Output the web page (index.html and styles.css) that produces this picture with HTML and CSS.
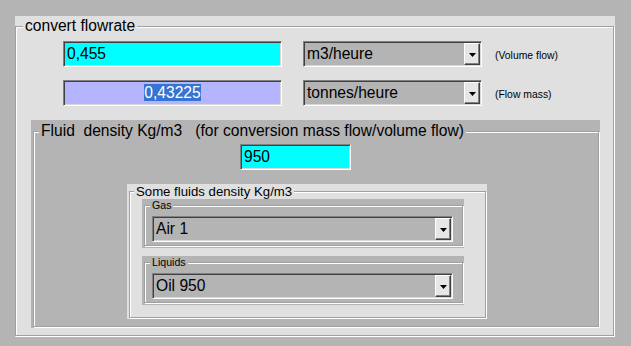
FILE: index.html
```html
<!DOCTYPE html>
<html>
<head>
<meta charset="utf-8">
<title>convert flowrate</title>
<link rel="stylesheet" href="styles.css">
</head>
<body>
<div class="panel">
  <fieldset class="grp grp-main">
    <legend class="lg-main">convert flowrate</legend>
    <div class="row row-first">
      <div class="field cyan">0,455</div>
      <div class="combo combo-unit"><span class="combo-text">m3/heure</span><span class="btn"><svg width="7" height="4" viewBox="0 0 7 4"><polygon points="0,0 7,0 3.5,4" fill="#000"/></svg></span></div>
      <div class="note">(Volume flow)</div>
    </div>
    <div class="row">
      <div class="field lavender center"><span class="sel">0,43225</span></div>
      <div class="combo combo-unit"><span class="combo-text">tonnes/heure</span><span class="btn"><svg width="7" height="4" viewBox="0 0 7 4"><polygon points="0,0 7,0 3.5,4" fill="#000"/></svg></span></div>
      <div class="note">(Flow mass)</div>
    </div>
    <div class="wrap-fluid">
      <fieldset class="grp grp-dark">
        <legend class="lg-fluid">Fluid  density Kg/m3   (for conversion mass flow/volume flow)</legend>
        <div class="field cyan density">950</div>
        <div class="wrap-some">
          <fieldset class="grp grp-light">
            <legend class="lg-some">Some fluids density Kg/m3</legend>
            <div class="wrap-sub wrap-gas">
              <fieldset class="grp grp-dark">
                <legend class="lg-small">Gas</legend>
                <div class="combo combo-fluid"><span class="combo-text">Air 1</span><span class="btn"><svg width="7" height="4" viewBox="0 0 7 4"><polygon points="0,0 7,0 3.5,4" fill="#000"/></svg></span></div>
              </fieldset>
            </div>
            <div class="wrap-sub wrap-liq">
              <fieldset class="grp grp-dark">
                <legend class="lg-small">Liquids</legend>
                <div class="combo combo-fluid"><span class="combo-text">Oil 950</span><span class="btn"><svg width="7" height="4" viewBox="0 0 7 4"><polygon points="0,0 7,0 3.5,4" fill="#000"/></svg></span></div>
              </fieldset>
            </div>
          </fieldset>
        </div>
      </fieldset>
    </div>
  </fieldset>
</div>
</body>
</html>
```
FILE: styles.css
```css
* { box-sizing: border-box; }

html, body {
  margin: 0;
  padding: 0;
}

body {
  background: #b4b4b4;
  font-family: "Liberation Sans", Arial, sans-serif;
  color: #000;
  width: 631px;
  height: 346px;
  overflow: hidden;
}

.panel {
  margin: 16px 0 0 15px;
  width: 600px;
  height: 321px;
  background: #e0e0e0;
  padding-top: 2px;
  display: flow-root;
}

.grp {
  margin: 0;
  padding: 0;
  min-width: 0;
  border: 1px solid #a0a0a0;
  box-shadow: inset 1px 1px 0 #fff, 1px 1px 0 #fff;
}

.grp > legend {
  padding: 0 2px;
  white-space: pre;
}

.grp-main { margin-right: 1px; }

.lg-main {
  margin-left: 7px;
  font-size: 15.6px;
  line-height: 16px;
  background: #e0e0e0;
}

.lg-fluid {
  margin-left: 5px;
  font-size: 15.6px;
  line-height: 16px;
  background: #b4b4b4;
}

.lg-some {
  margin-left: 4px;
  font-size: 13.2px;
  line-height: 15px;
  background: #e0e0e0;
}

.lg-small {
  margin-left: 5px;
  font-size: 10.6px;
  line-height: 13px;
  background: #b4b4b4;
}

.row {
  display: flex;
  height: 26px;
  margin-left: 47px;
  margin-top: 13px;
}

.row-first { margin-top: 7px; }

.field {
  width: 219px;
  height: 26px;
  border: 1px solid;
  border-color: #808080 #fff #fff #808080;
  box-shadow: inset 1px 1px 0 #404040, inset -1px -1px 0 #d8d8d8;
  font-size: 15.6px;
  line-height: 24px;
  padding-left: 3px;
  white-space: nowrap;
}

.cyan { background: #00ffff; }
.lavender { background: #b4b4ff; }
.center { text-align: center; padding-left: 0; }

.sel {
  display: inline-block;
  background: #3574d2;
  color: #fff;
  line-height: 17px;
  vertical-align: middle;
  margin-top: -2px;
}

.combo {
  display: flex;
  height: 26px;
  border: 1px solid;
  border-color: #808080 #fff #fff #808080;
  box-shadow: inset 1px 1px 0 #404040, inset -1px -1px 0 #d8d8d8;
  background: #b4b4b4;
  padding: 1px;
}

.combo-unit {
  width: 179px;
  margin-left: 21px;
}

.combo-text {
  flex: 1;
  font-size: 15.6px;
  line-height: 22px;
  padding-left: 2px;
  white-space: nowrap;
  overflow: hidden;
}

.btn {
  width: 16px;
  height: 22px;
  background: #e6e6e6;
  border: 1px solid;
  border-color: #fff #404040 #404040 #fff;
  box-shadow: inset -1px -1px 0 #808080;
  display: flex;
  align-items: center;
  justify-content: center;
}

.btn svg { display: block; margin-top: 1px; }

.note {
  font-size: 10.4px;
  line-height: 12px;
  margin-left: 13px;
  align-self: center;
  margin-top: 3px;
  white-space: nowrap;
}

.wrap-fluid {
  background: #b4b4b4;
  margin: 14px 0 7px 15px;
  width: 569px;
  padding: 3px 1px 1px 2px;
}

.density {
  width: 111px;
  margin: 5px 0 0 206px;
}

.wrap-some {
  background: #e0e0e0;
  width: 360px;
  margin: 14px 0 7px 93px;
  padding: 0 1px 1px 2px;
}

.wrap-sub {
  background: #b4b4b4;
  width: 322px;
  margin-left: 12px;
  padding: 0 1px 2px 2px;
}

.wrap-liq {
  margin-top: 8px;
  margin-bottom: 12px;
}

.combo-fluid {
  width: 301px;
  margin: 4px 0 3px 7px;
}
```
